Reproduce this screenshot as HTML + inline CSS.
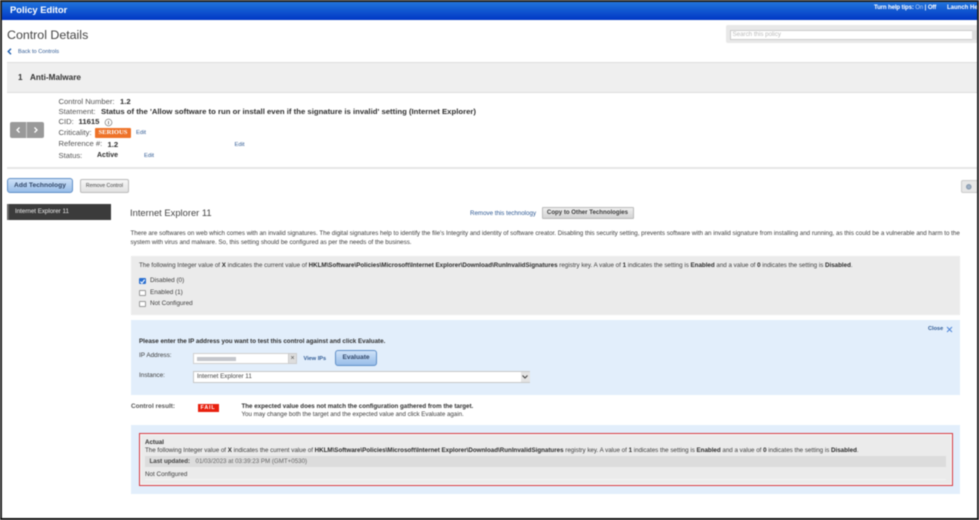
<!DOCTYPE html>
<html><head><meta charset="utf-8"><style>
html,body{margin:0;padding:0;background:#fff}
#p{position:relative;width:979px;height:520px;overflow:hidden;background:#fff;font-family:"Liberation Sans",Arial,sans-serif;color:#3c3c3c;font-size:6.2px;filter:blur(.4px)}
#p div{position:absolute;white-space:nowrap;box-sizing:border-box}
b{color:#2a2a2a}
.l{color:#2f5a94}
.lb{font-size:7.65px;color:#555;line-height:10px}
.v{font-size:7.68px;color:#2e2e2e;font-weight:bold;line-height:10px}
.e{font-size:5.8px;color:#2f5a94;line-height:8px}
.cb{width:6.5px;height:6.5px;background:#fff;border:1px solid #999;border-radius:1px}
</style></head><body><div id="p">
<div style="left:2px;top:2px;width:975px;height:18px;background:linear-gradient(#2074dc,#0037c4)"></div>
<div style="left:10px;top:3.5px;font-size:9.4px;line-height:12px;font-weight:bold;color:#fff">Policy Editor</div>
<div style="left:874px;top:4px;font-size:6px;line-height:9px;color:#fff;font-weight:bold;letter-spacing:-.1px">Turn help tips: <span style="color:#b8cdf0;font-weight:normal">On</span> | Off</div>
<div style="left:947px;top:3.5px;font-size:6px;line-height:9px;color:#fff;font-weight:bold">Launch Help</div>

<div style="left:7px;top:26.5px;font-size:12.4px;line-height:16px;color:#444">Control Details</div>
<svg style="position:absolute;left:7px;top:48px" width="5" height="7"><path d="M4 .8L1.2 3.5 4 6.2" fill="none" stroke="#1f5fb0" stroke-width="1.4"/></svg>
<div class="l" style="left:18px;top:47.5px;font-size:5.6px;line-height:8px">Back to Controls</div>

<div style="left:726px;top:25px;width:251px;height:18px;background:#e8e8e8;border-radius:2px 0 0 2px"></div>
<div style="left:729.5px;top:29.5px;width:244px;height:10px;background:#fff;border:1px solid #ccc;font-size:6.2px;line-height:8px;color:#bbb;padding-left:2px">Search this policy</div>
<div style="left:972px;top:29.5px;width:5px;height:10px;background:#ddd"></div>

<div style="left:7px;top:62px;width:970px;height:31px;background:#efefef;border-top:1px solid #ddd;border-bottom:1px solid #ddd"></div>
<div style="left:18px;top:72px;font-size:8.2px;line-height:11px;font-weight:bold;color:#333">1</div>
<div style="left:30px;top:72px;font-size:8.2px;line-height:11px;font-weight:bold;color:#333">Anti-Malware</div>

<div class="lb" style="left:58.5px;top:97px">Control Number:</div><div class="v" style="left:120px;top:97px">1.2</div>
<div class="lb" style="left:58.5px;top:107px">Statement:</div><div class="v" style="left:101px;top:107px;font-size:7.74px">Status of the 'Allow software to run or install even if the signature is invalid' setting (Internet Explorer)</div>
<div class="lb" style="left:58.5px;top:117px">CID:</div><div class="v" style="left:78.5px;top:117px">11615</div>
<svg style="position:absolute;left:104px;top:118px" width="9" height="9"><circle cx="4.5" cy="4.5" r="3.4" fill="none" stroke="#888" stroke-width=".8"/><path d="M4.5 3v3.4" stroke="#777" stroke-width=".9"/></svg>
<div class="lb" style="left:58.5px;top:128px">Criticality:</div>
<div style="left:95px;top:128px;width:36px;height:10px;background:#ee7228;border-radius:1px;color:#fff;font:bold 6.6px/10px 'Liberation Serif',serif;text-align:center">SERIOUS</div>
<div class="e" style="left:136px;top:129px">Edit</div>
<div class="lb" style="left:58.5px;top:139px">Reference #:</div><div class="v" style="left:107.5px;top:140px">1.2</div>
<div class="e" style="left:234.5px;top:141px">Edit</div>
<div class="lb" style="left:58.5px;top:151px">Status:</div><div class="v" style="left:97px;top:151px;font-size:7px">Active</div>
<div class="e" style="left:144px;top:152px">Edit</div>

<div style="left:10px;top:122px;width:33.5px;height:16px;background:#999;border-radius:2px"></div>
<div style="left:26px;top:122px;width:1px;height:16px;background:#ccc"></div>
<svg style="position:absolute;left:10px;top:122px" width="34" height="16"><path d="M9.5 5.5L7 8l2.5 2.5M24.5 5.5L27 8l-2.5 2.5" fill="none" stroke="#fff" stroke-width="1.3"/></svg>

<div style="left:7px;top:167px;width:970px;height:1.5px;background:#e6e6e6"></div>

<div style="left:7px;top:178px;width:66px;height:15px;background:linear-gradient(#cfe2f8,#98bde8);border:1px solid #5f8fc8;border-radius:3px;font-size:6.7px;line-height:13px;font-weight:bold;color:#33486a;text-align:center">Add Technology</div>
<div style="left:80px;top:179px;width:49px;height:14px;background:linear-gradient(#f6f6f6,#e2e2e2);border:1px solid #bbb;border-radius:2px;font-size:5.15px;line-height:12px;color:#444;text-align:center">Remove Control</div>
<div style="left:961px;top:180px;width:16px;height:13px;background:#e6e6e6;border:1px solid #ccc;border-right:0;border-radius:2px 0 0 2px"></div>
<svg style="position:absolute;left:965px;top:182.5px" width="8" height="8"><circle cx="3.8" cy="3.8" r="2.2" fill="#9fb0c4" stroke="#8a9cb0" stroke-width="1.2"/></svg>

<div style="left:7px;top:204px;width:104px;height:16px;background:#3b3b3b;border-left:2px solid #666;color:#eee;font-size:6.2px;line-height:15px;padding-left:6px">Internet Explorer 11</div>

<div style="left:130px;top:206px;font-size:9.4px;line-height:13px;color:#444">Internet Explorer 11</div>
<div class="l" style="left:470px;top:209px;font-size:6.2px;line-height:9px">Remove this technology</div>
<div style="left:541.5px;top:207px;width:92px;height:12px;background:linear-gradient(#eee,#d4d4d4);border:1px solid #bbb;border-radius:1px;font-size:6.1px;line-height:10px;font-weight:bold;color:#3c3c3c;text-align:center">Copy to Other Technologies</div>

<div style="left:130.5px;top:229px;font-size:6.21px;line-height:9px">There are softwares on web which comes with an invalid signatures. The digital signatures help to identify the file's Integrity and identity of software creator. Disabling this security setting, prevents software with an invalid signature from installing and running, as this could be a vulnerable and harm to the</div>
<div style="left:130.5px;top:237.5px;font-size:6.21px;line-height:9px">system with virus and malware. So, this setting should be configured as per the needs of the business.</div>

<div style="left:131px;top:256px;width:829px;height:58.5px;background:#ebebeb"></div>
<div style="left:139px;top:261px;font-size:6.21px;line-height:9px">The following Integer value of <b>X</b> indicates the current value of <b>HKLM\Software\Policies\Microsoft\Internet Explorer\Download\RunInvalidSignatures</b> registry key. A value of <b>1</b> indicates the setting is <b>Enabled</b> and a value of <b>0</b> indicates the setting is <b>Disabled</b>.</div>
<div class="cb" style="left:139px;top:277.5px;background:#2a6fd0;border-color:#2a6fd0"></div>
<svg style="position:absolute;left:139px;top:277.5px" width="7" height="7"><path d="M1.4 3.6l1.5 1.6 2.8-3.6" fill="none" stroke="#fff" stroke-width="1.1"/></svg>
<div class="cb" style="left:139px;top:289.5px"></div>
<div class="cb" style="left:139px;top:300.7px"></div>
<div style="left:150px;top:276px;font-size:6.35px;line-height:9px">Disabled (0)</div>
<div style="left:150px;top:287.5px;font-size:6.35px;line-height:9px">Enabled (1)</div>
<div style="left:150px;top:299px;font-size:6.35px;line-height:9px">Not Configured</div>

<div style="left:131px;top:320px;width:829px;height:75px;background:#e2eefb"></div>
<div class="l" style="left:928px;top:325px;font-size:5.6px;line-height:9px;font-weight:bold">Close</div>
<svg style="position:absolute;left:945.5px;top:325.5px" width="7" height="7"><path d="M1 1l5 5M6 1L1 6" stroke="#4f86d8" stroke-width="1"/></svg>
<div style="left:139px;top:337px;font-size:6.22px;line-height:9px;font-weight:bold;color:#2e2e2e">Please enter the IP address you want to test this control against and click Evaluate.</div>
<div style="left:139px;top:351px;font-size:6.4px;line-height:9px">IP Address:</div>
<div style="left:193px;top:353px;width:98px;height:11px;background:#fff;border:1px solid #d0d0d0"></div>
<div style="left:197px;top:356.5px;width:39px;height:4px;background:#c4c6cc"></div>
<div style="left:288px;top:353px;width:9px;height:11px;background:#ddd;border:1px solid #ccc;font-size:7px;line-height:9px;text-align:center;color:#555">×</div>
<div class="l" style="left:303.5px;top:355px;font-size:5.6px;line-height:9px;font-weight:bold">View IPs</div>
<div style="left:335px;top:350px;width:42px;height:16px;background:linear-gradient(#cfe2f8,#98bde8);border:1px solid #5f8fc8;border-radius:3px;font-size:6.6px;line-height:14px;font-weight:bold;color:#33486a;text-align:center">Evaluate</div>
<div style="left:139px;top:371px;font-size:6.4px;line-height:9px">Instance:</div>
<div style="left:193px;top:371px;width:337px;height:12px;background:#fff;border:1px solid #c8c8c8;font-size:6.3px;line-height:10px;padding-left:3px;color:#444">Internet Explorer 11</div>
<div style="left:520.5px;top:372px;width:9px;height:10px;background:#e4e4e4"></div>
<svg style="position:absolute;left:521px;top:374px" width="8" height="6"><path d="M1.5 1.5L4 4l2.5-2.5" fill="none" stroke="#444" stroke-width="1.1"/></svg>

<div style="left:131px;top:402px;font-size:6.4px;line-height:9px;font-weight:bold;color:#555">Control result:</div>
<div style="left:197.5px;top:403.5px;width:21px;height:8px;background:#e8200e;color:#fff;font-size:5.4px;line-height:8px;font-weight:bold;letter-spacing:.8px;text-align:center">FAIL</div>
<div style="left:241.5px;top:402px;font-size:6.2px;line-height:9px;font-weight:bold;color:#2e2e2e">The expected value does not match the configuration gathered from the target.</div>
<div style="left:241.5px;top:409.5px;font-size:6.17px;line-height:9px">You may change both the target and the expected value and click Evaluate again.</div>

<div style="left:131px;top:425px;width:829px;height:69px;background:#e2eefb"></div>
<div style="left:139px;top:432.5px;width:814px;height:53.5px;background:#ebebeb;border:1.3px solid #d4383e;box-shadow:inset 0 0 0 .7px #fff"></div>
<div style="left:145px;top:438px;font-size:6.2px;line-height:9px;font-weight:bold;color:#2e2e2e">Actual</div>
<div style="left:145px;top:445.5px;font-size:6.21px;line-height:9px">The following Integer value of <b>X</b> indicates the current value of <b>HKLM\Software\Policies\Microsoft\Internet Explorer\Download\RunInvalidSignatures</b> registry key. A value of <b>1</b> indicates the setting is <b>Enabled</b> and a value of <b>0</b> indicates the setting is <b>Disabled</b>.</div>
<div style="left:145px;top:456px;width:801px;height:10.5px;background:#dcdcdc"></div>
<div style="left:149.5px;top:456.5px;font-size:6.2px;line-height:9px;font-weight:bold;color:#444">Last updated:</div>
<div style="left:195.5px;top:456.5px;font-size:6.2px;line-height:9px;color:#666">01/03/2023 at 03:39:23 PM (GMT+0530)</div>
<div style="left:145px;top:470px;font-size:6.3px;line-height:9px">Not Configured</div>
<div style="left:145px;top:479px;width:801px;height:1px;background:#f4f4f4"></div>

<div style="left:0;top:0;width:979px;height:2px;background:#222"></div>
<div style="left:0;top:0;width:2px;height:520px;background:#222"></div>
<div style="left:977px;top:0;width:2px;height:520px;background:#222"></div>
<div style="left:0;top:518px;width:979px;height:2px;background:#111"></div>
</div></body></html>
